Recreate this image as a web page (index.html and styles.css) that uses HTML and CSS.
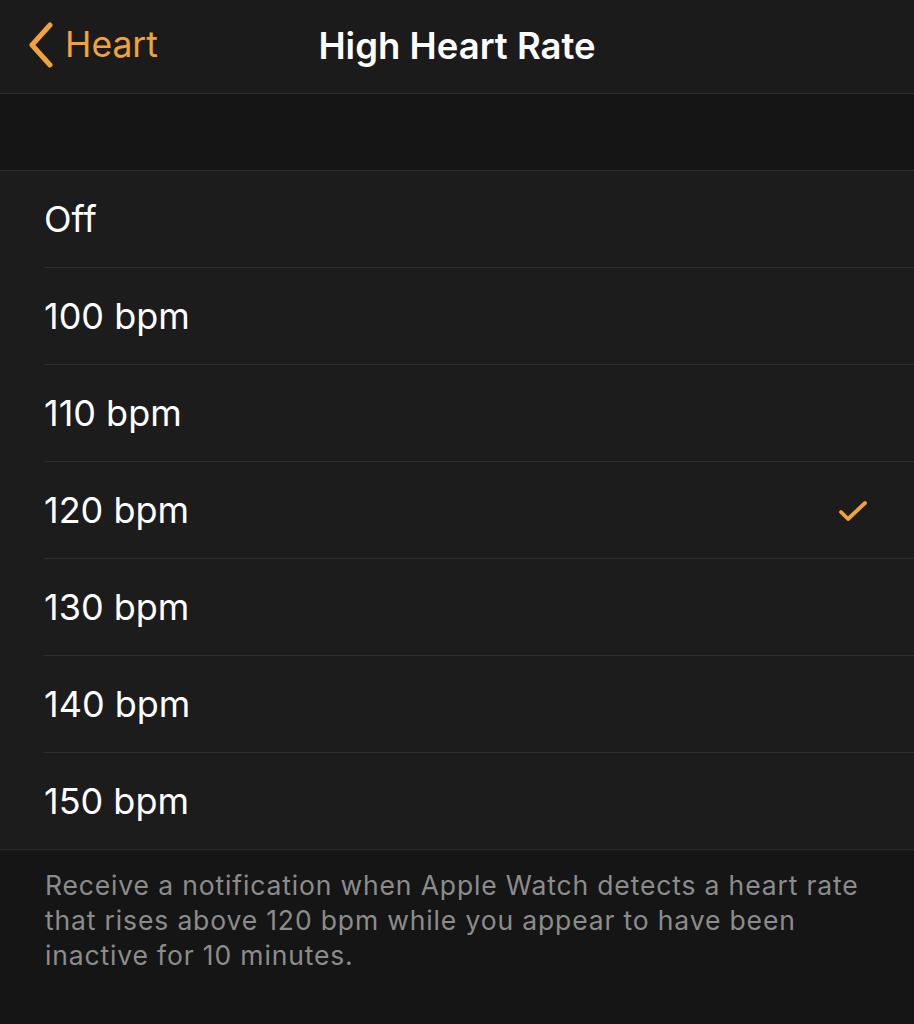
FILE: index.html
```html
<!DOCTYPE html>
<html>
<head>
  <title>High Heart Rate</title>
  <meta name="viewport" content="width=device-width, initial-scale=1.0">
  <link rel="stylesheet" href="styles.css">
</head>
<body>
  <div class="screen">
    <div class="navbar">
      <a class="back" href="#">
        <svg class="chevron" width="28" height="46" viewBox="0 0 28 46">
          <path d="M24 3 L6 23 L24 43" fill="none" stroke="#f0a33a" stroke-width="5" stroke-linecap="round" stroke-linejoin="round"/>
        </svg>
        <span>Heart</span>
      </a>
      <h1 class="title">High Heart Rate</h1>
    </div>

    <div class="spacer"></div>

    <ul class="options">
      <li class="option">Off</li>
      <li class="option">100 bpm</li>
      <li class="option">110 bpm</li>
      <li class="option selected">120 bpm
        <svg class="check" width="30" height="24" viewBox="0 0 30 24">
          <path d="M3 13 L10 20 L27 4" fill="none" stroke="#f0a33a" stroke-width="3.8" stroke-linecap="round" stroke-linejoin="round"/>
        </svg>
      </li>
      <li class="option">130 bpm</li>
      <li class="option">140 bpm</li>
      <li class="option">150 bpm</li>
    </ul>

    <p class="footer">Receive a notification when Apple Watch detects a heart rate that rises above 120 bpm while you appear to have been inactive for 10 minutes.</p>
  </div>
</body>
</html>
```

FILE: styles.css
```css
body {
  margin: 0;
  padding: 0;
  background-color: #151515;
  font-family: Inter, "Noto Sans", sans-serif;
  color: #ffffff;
}

.screen {
  width: 914px;
  height: 1024px;
  overflow: hidden;
  background-color: #151515;
}

.navbar {
  height: 93px;
  background-color: #1b1b1b;
  border-bottom: 1px solid #2c2c2c;
  display: flex;
  align-items: center;
  justify-content: center;
  position: relative;
}

.back {
  position: absolute;
  left: 26px;
  top: 22px;
  display: flex;
  align-items: center;
  gap: 11px;
  color: #f0a33a;
  text-decoration: none;
  font-size: 35.5px;
  line-height: 46px;
}

.title {
  margin: 0 0 2px 0;
  font-size: 36.5px;
  font-weight: 600;
  letter-spacing: 0;
}

.spacer {
  height: 76px;
  border-bottom: 1px solid #2c2c2c;
}

.options {
  list-style: none;
  margin: 0;
  padding: 0 0 0 44px;
  background-color: #1c1c1c;
  border-bottom: 1px solid #2c2c2c;
}

.option {
  height: 96px;
  display: flex;
  align-items: center;
  justify-content: space-between;
  padding-right: 46px;
  font-size: 36px;
  border-bottom: 1px solid #2e2e2e;
}

.option:last-child {
  border-bottom: none;
}

.check {
  margin-top: 2px;
}

.footer {
  margin: 0;
  padding: 18px 40px 0 45px;
  font-size: 26.5px;
  line-height: 35px;
  color: #8c8c8c;
  letter-spacing: 0.85px;
}
```
